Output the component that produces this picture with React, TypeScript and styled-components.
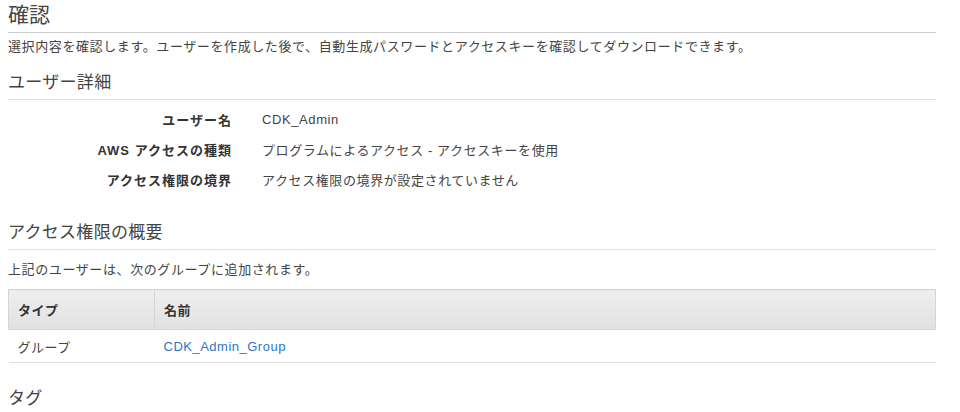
import React from 'react';
import styled, { createGlobalStyle } from 'styled-components';

const GlobalStyle = createGlobalStyle`
  body {
    margin: 0;
    background: #fff;
    font-family: "Liberation Sans", Arial, "Noto Sans CJK JP", sans-serif;
    color: #444;
  }
`;

const Page = styled.div`
  padding: 0 24px 0 8px;
`;

const Title = styled.h1`
  margin: 3px 0 0;
  padding-bottom: 5px;
  font-size: 21px;
  line-height: 24px;
  font-weight: normal;
  border-bottom: 1px solid #ccc;
`;

const SectionTitle = styled.h2<{ $top: number }>`
  margin: ${p => p.$top}px 0 0;
  padding-bottom: 5px;
  font-size: 17px;
  line-height: 22px;
  letter-spacing: 0.3px;
  font-weight: normal;
  border-bottom: 1px solid #ddd;
`;

const Text = styled.p<{ $top: number }>`
  margin: ${p => p.$top}px 0 0;
  font-size: 13px;
  line-height: 16px;
  letter-spacing: 0.6px;
`;

const Details = styled.dl`
  margin: 4px 0 0;
  display: grid;
  grid-template-columns: 224px 1fr;
  grid-auto-rows: 30px;
  column-gap: 30px;
  font-size: 13px;
  letter-spacing: 0.6px;
  align-items: center;
`;

const Label = styled.dt`
  text-align: right;
  font-weight: bold;
  letter-spacing: 1px;
  color: #333;
`;

const Value = styled.dd`
  margin: 0;
`;

const Table = styled.table`
  margin-top: 11px;
  width: 100%;
  border-collapse: collapse;
  font-size: 13px;
  letter-spacing: 0.5px;
`;

const HeadCell = styled.th<{ $w?: number }>`
  width: ${p => (p.$w ? `${p.$w}px` : 'auto')};
  height: 39px;
  padding: 0 9px;
  text-align: left;
  font-weight: bold;
  color: #333;
  background: linear-gradient(#eee, #e1e1e1);
  border: 1px solid #d5d5d5;
`;

const Cell = styled.td`
  height: 32px;
  padding: 0 9px;
  border-bottom: 1px solid #ddd;
`;

const Link = styled.a`
  color: #2e75c9;
  text-decoration: none;
`;

export default function App() {
  return (
    <Page>
      <GlobalStyle />
      <Title>確認</Title>
      <Text $top={6}>
        選択内容を確認します。ユーザーを作成した後で、自動生成パスワードとアクセスキーを確認してダウンロードできます。
      </Text>

      <SectionTitle $top={17}>ユーザー詳細</SectionTitle>
      <Details>
        <Label>ユーザー名</Label>
        <Value>CDK_Admin</Value>
        <Label>AWS アクセスの種類</Label>
        <Value>プログラムによるアクセス - アクセスキーを使用</Value>
        <Label>アクセス権限の境界</Label>
        <Value>アクセス権限の境界が設定されていません</Value>
      </Details>

      <SectionTitle $top={28}>アクセス権限の概要</SectionTitle>
      <Text $top={12}>上記のユーザーは、次のグループに追加されます。</Text>
      <Table>
        <thead>
          <tr>
            <HeadCell $w={127}>タイプ</HeadCell>
            <HeadCell>名前</HeadCell>
          </tr>
        </thead>
        <tbody>
          <tr>
            <Cell>グループ</Cell>
            <Cell>
              <Link href="#">CDK_Admin_Group</Link>
            </Cell>
          </tr>
        </tbody>
      </Table>

      <SectionTitle $top={25}>タグ</SectionTitle>
    </Page>
  );
}
